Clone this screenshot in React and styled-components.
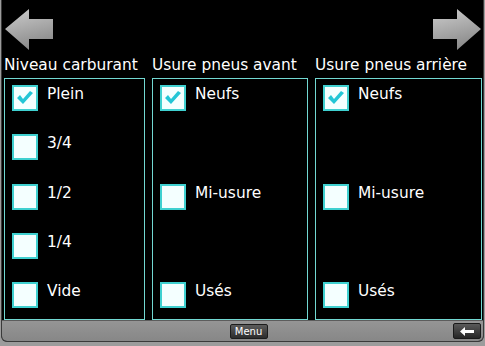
import React from "react"
import styled, { createGlobalStyle } from "styled-components"

const GlobalStyle = createGlobalStyle`
  html, body {
    margin: 0;
    padding: 0;
    background: #9a9a9a;
  }
  * {
    box-sizing: border-box;
  }
`

const Frame = styled.div`
  width: 485px;
  height: 346px;
  background: #9c9c9c;
  padding: 0 1px 4px 1px;
  font-family: "DejaVu Sans", "Liberation Sans", sans-serif;
`

const Screen = styled.div`
  display: flex;
  flex-direction: column;
  height: 342px;
  background: #000;
  border: 1px solid #3a3a3a;
  border-top: none;
  border-radius: 0 0 6px 6px;
  overflow: hidden;
`

const NavRow = styled.div`
  display: flex;
  justify-content: space-between;
  align-items: flex-start;
  height: 56px;
  padding: 9px 1px 0 3px;
`

const Columns = styled.div`
  display: grid;
  grid-template-columns: 141px 156px 167px;
  column-gap: 7px;
  padding-left: 2px;
`

const Column = styled.div`
  display: flex;
  flex-direction: column;
`

const Heading = styled.div`
  height: 22px;
  color: #fff;
  font-size: 15.4px;
  line-height: 19px;
  white-space: nowrap;
`

const Panel = styled.div`
  display: flex;
  flex-direction: column;
  justify-content: space-between;
  height: 242px;
  padding: 6px 0 11px 7px;
  border: 1px solid #72d8d2;
`

const Option = styled.div`
  display: flex;
  align-items: flex-start;
  gap: 9px;
  color: #fff;
  font-size: 15.4px;
  line-height: 19px;
`

const Box = styled.div`
  display: flex;
  align-items: center;
  justify-content: center;
  width: 26px;
  height: 26px;
  background: #f4ffff;
  border: 2px solid #3fd0d0;
`

const BottomBar = styled.div`
  display: grid;
  grid-template-columns: 1fr auto 1fr;
  align-items: center;
  height: 21px;
  margin-top: auto;
  padding: 0 2px 0 0;
  background: linear-gradient(#959595, #878787);
  border-top: 1px solid #5c5c5c;
`

const MenuButton = styled.div`
  grid-column: 2;
  margin-left: 14px;
  width: 38px;
  height: 15px;
  color: #fff;
  font-size: 10px;
  line-height: 13px;
  text-align: center;
  background: linear-gradient(#5c5c5c, #2c2c2c);
  border: 1px solid #1c1c1c;
  border-radius: 2px;
`

const BackButton = styled.div`
  grid-column: 3;
  justify-self: end;
  display: flex;
  align-items: center;
  justify-content: center;
  width: 28px;
  height: 16px;
  background: linear-gradient(#5a5a5a, #262626);
  border: 1px solid #1a1a1a;
  border-radius: 2px;
`

const Arrow = ({ dir }) => (
  <svg width="49" height="42" viewBox="0 0 49 42">
    <defs>
      <linearGradient id={`g-${dir}`} x1="0" y1="0" x2="0.3" y2="1">
        <stop offset="0" stopColor="#cdcdcd" />
        <stop offset="1" stopColor="#8c8c8c" />
      </linearGradient>
    </defs>
    <polygon
      points={
        dir === "left"
          ? "0,20 24,0 24,10 48,10 48,30 24,30 24,41"
          : "48,20 24,0 24,10 0,10 0,30 24,30 24,41"
      }
      fill={`url(#g-${dir})`}
    />
  </svg>
)

const Check = () => (
  <svg width="18" height="16" viewBox="0 0 18 16">
    <path d="M1 8 L7 14 L17 3 L14 1 L7 9 L4 5 Z" fill="#22c6d6" />
  </svg>
)

const columns = [
  { title: "Niveau carburant", options: ["Plein", "3/4", "1/2", "1/4", "Vide"], checked: 0 },
  { title: "Usure pneus avant", options: ["Neufs", "Mi-usure", "Usés"], checked: 0 },
  { title: "Usure pneus arrière", options: ["Neufs", "Mi-usure", "Usés"], checked: 0 },
]

const App = () => (
  <>
    <GlobalStyle />
    <Frame>
      <Screen>
        <NavRow>
          <Arrow dir="left" />
          <Arrow dir="right" />
        </NavRow>
        <Columns>
          {columns.map(col => (
            <Column key={col.title}>
              <Heading>{col.title}</Heading>
              <Panel>
                {col.options.map((opt, i) => (
                  <Option key={opt}>
                    <Box>{i === col.checked && <Check />}</Box>
                    <span>{opt}</span>
                  </Option>
                ))}
              </Panel>
            </Column>
          ))}
        </Columns>
        <BottomBar>
          <MenuButton>Menu</MenuButton>
          <BackButton>
            <svg width="14" height="9" viewBox="0 0 14 9">
              <polygon points="0,4.5 5,0 5,3 14,3 14,6 5,6 5,9" fill="#fff" />
            </svg>
          </BackButton>
        </BottomBar>
      </Screen>
    </Frame>
  </>
)

export default App
